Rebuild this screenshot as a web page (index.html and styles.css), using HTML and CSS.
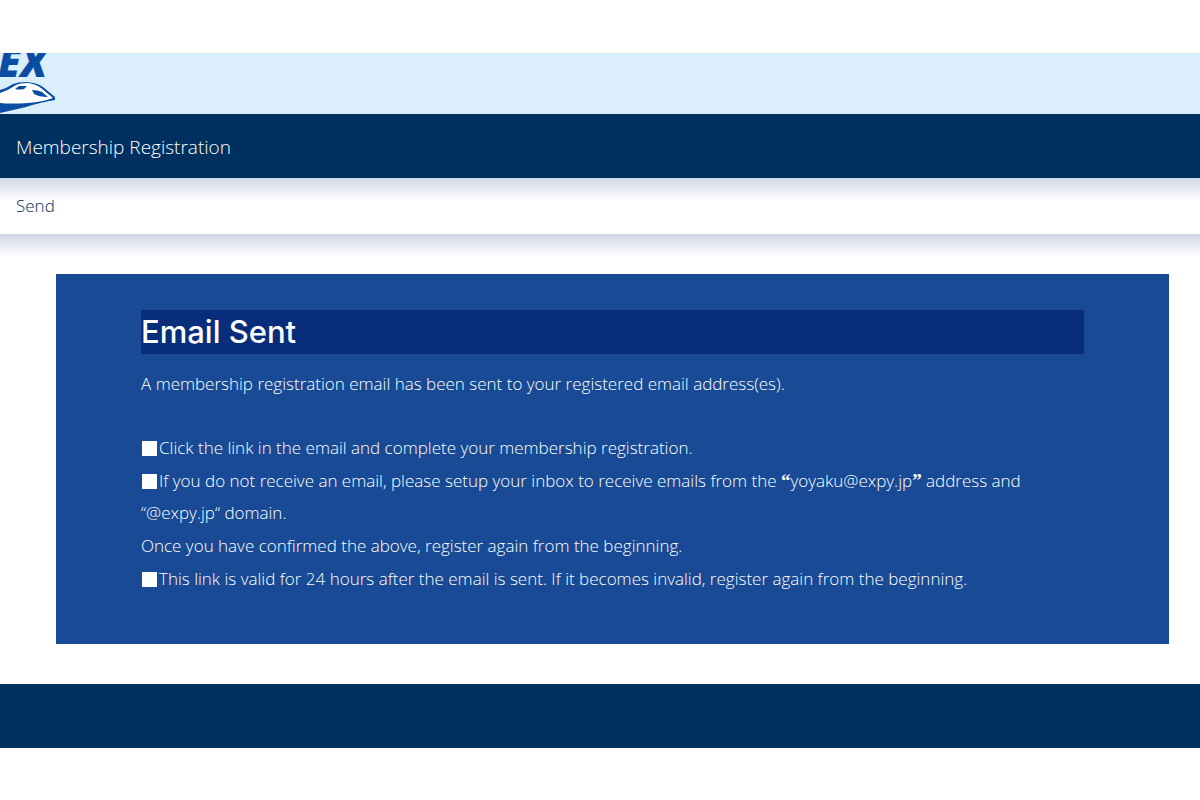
FILE: index.html
```
<!DOCTYPE html>
<html lang="en">

<head>
  <meta charset="UTF-8">
  <meta name="viewport" content="width=device-width, initial-scale=1.0">
  <title>Membership Registration</title>
  <link rel="stylesheet" href="styles.css">
</head>

<body>
  <header class="site-header">
    <svg class="logo" width="60" height="61" viewBox="0 0 60 61" role="img" aria-label="EX">
      <text class="logo-text" x="-2" y="24">EX</text>
      <path fill="#0b4da2" d="M0 48 L0 37 Q7 35 13 31 Q18 29 27 29 Q38 30 43 34 Q49 39 55 44 L55 47 Q38 50 26 54 L0 60 Z" />
      <path fill="#fff" d="M0 50 L0 40 Q9 37 16 32 Q20 30 28 30 Q36 31 41 35 L53 45 Q43 49 28 50 Q10 51 0 50 Z" />
      <path fill="#0b4da2" d="M15 36 L19 33 L27 33 L24 36 Q19 37 15 36 Z M32 37 Q38 37 42 39 L48 44 Q39 44 34 41 Z" />
    </svg>
  </header>

  <div class="title-bar">
    <h1>Membership Registration</h1>
  </div>

  <div class="step-bar">
    <p>Send</p>
  </div>

  <main>
    <section class="panel">
      <h2>Email Sent</h2>
      <p class="lead">A membership registration email has been sent to your registered email address(es).</p>
      <div class="notes">
        <p class="marked">Click the link in the email and complete your membership registration.</p>
        <p class="marked">If you do not receive an email, please setup your inbox to receive emails from the <span class="quote">“</span>yoyaku@expy.jp<span class="quote">”</span> address and<br>“@expy.jp“ domain.</p>
        <p>Once you have confirmed the above, register again from the beginning.</p>
        <p class="marked">This link is valid for 24 hours after the email is sent. If it becomes invalid, register again from the beginning.</p>
      </div>
    </section>
  </main>

  <footer class="site-footer"></footer>
</body>

</html>
```

FILE: styles.css
```
* {
  box-sizing: border-box;
  margin: 0;
  padding: 0;
}

body {
  padding-top: 53px;
  background: #fff;
  color: #002f60;
  font-family: "Open Sans", "Noto Sans CJK JP", sans-serif;
  font-weight: 300;
  font-size: 17px;
}

.site-header {
  background: #daeefb;
}

.logo {
  display: block;
}

.logo-text {
  fill: #0b4da2;
  font: italic 800 40px "Open Sans", sans-serif;
}

.title-bar {
  padding: 17px 16px 15px;
  background: #003060;
  color: #fff;
}

.title-bar h1 {
  font-size: 19px;
  font-weight: 300;
  line-height: 32px;
}

.step-bar {
  padding: 12px 16px;
  line-height: 32px;
  background: linear-gradient(#d0d6e6, #fff 22px);
}

main {
  padding: 40px 31px 40px 56px;
  background: linear-gradient(#d0d6e6, #fff 22px);
}

.panel {
  padding: 36px 85px 49px;
  background: #184a95;
  color: #fff;
  line-height: 32px;
}

.panel h2 {
  margin-bottom: 14px;
  background: #082d7a;
  font-family: Inter, sans-serif;
  font-size: 31px;
  font-weight: 500;
  line-height: 44px;
}

.lead {
  margin-bottom: 32px;
}

.notes {
  display: grid;
  gap: 1px;
}

.marked::before {
  content: "";
  display: inline-block;
  width: 15px;
  height: 15px;
  margin: 0 2px -2px 1px;
  background: #fff;
}

.quote {
  font-family: "Liberation Serif", serif;
  font-size: 19px;
  font-weight: 700;
  line-height: 1;
}

.site-footer {
  height: 64px;
  background: #003060;
}
```
